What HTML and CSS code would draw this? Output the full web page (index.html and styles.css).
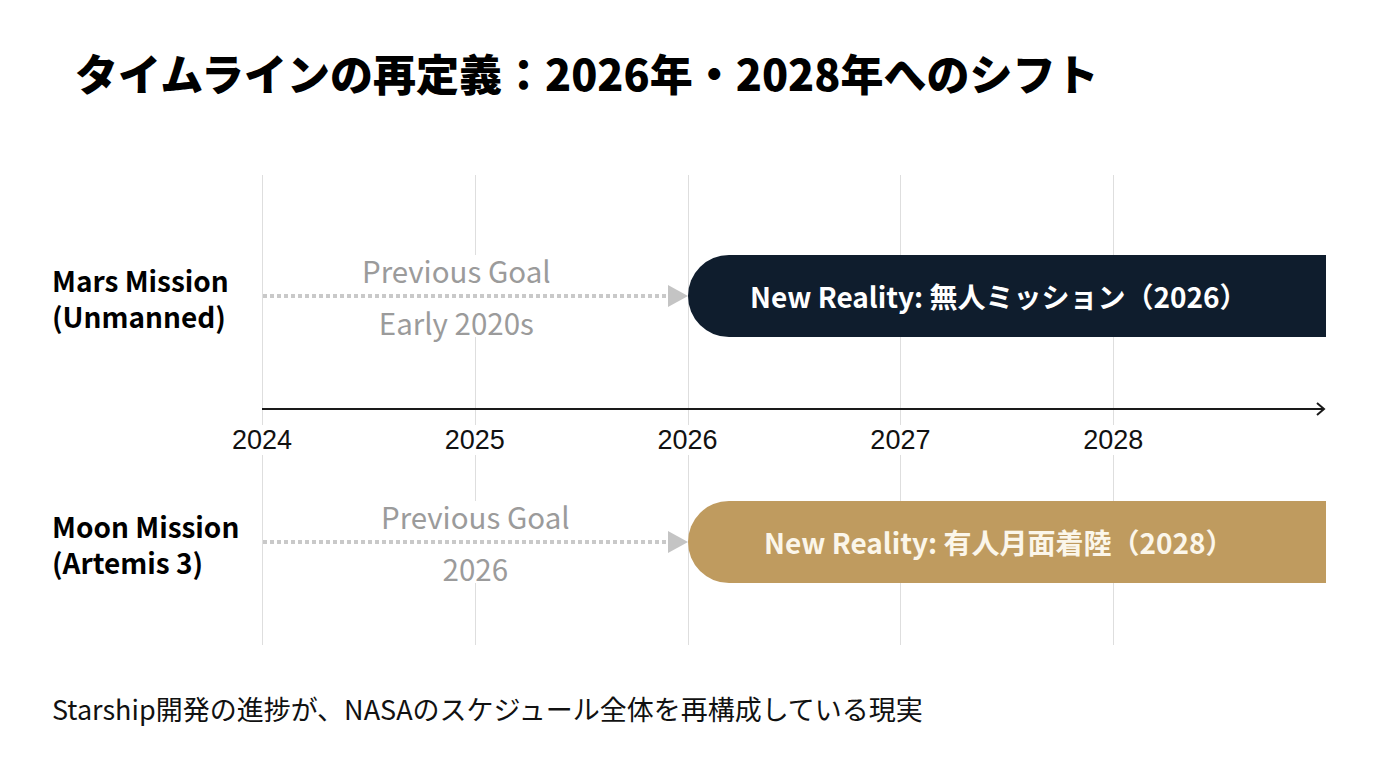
FILE: index.html
```html
<!DOCTYPE html>
<html lang="ja">
<head>
<meta charset="utf-8">
<title>タイムラインの再定義</title>
<link rel="stylesheet" href="styles.css">
</head>
<body>
<div class="slide">
  <h1 class="title">タイムラインの再定義：2026年・2028年へのシフト</h1>
  <div class="chart">
    <div class="grid-bg"></div>

    <div class="row-label mars-label"><div class="line">Mars Mission</div><div class="line">(Unmanned)</div></div>
    <div class="track mars-track">
      <div class="prev prev-mars">
        <div class="prev-text">Previous Goal</div>
        <div class="arrow"><div class="dots"></div><div class="head"></div></div>
        <div class="prev-text">Early 2020s</div>
      </div>
      <div class="bar bar-navy">New Reality: 無人ミッション（2026）</div>
    </div>

    <div class="axis">
      <svg class="axis-line" width="1064" height="18" viewBox="0 0 1064 18">
        <line x1="0" y1="9" x2="1062" y2="9" stroke="#1a1a1a" stroke-width="2"/>
        <polyline points="1055,3 1062,9 1055,15" fill="none" stroke="#1a1a1a" stroke-width="2"/>
      </svg>
      <div class="ticks">
        <div class="tick"><span>2024</span></div>
        <div class="tick"><span>2025</span></div>
        <div class="tick"><span>2026</span></div>
        <div class="tick"><span>2027</span></div>
        <div class="tick"><span>2028</span></div>
      </div>
    </div>

    <div class="row-label moon-label"><div class="line">Moon Mission</div><div class="line">(Artemis 3)</div></div>
    <div class="track moon-track">
      <div class="prev">
        <div class="prev-text">Previous Goal</div>
        <div class="arrow"><div class="dots"></div><div class="head"></div></div>
        <div class="prev-text">2026</div>
      </div>
      <div class="bar bar-gold">New Reality: 有人月面着陸（2028）</div>
    </div>
  </div>
  <p class="footer">Starship開発の進捗が、NASAのスケジュール全体を再構成している現実</p>
</div>
</body>
</html>
```

FILE: styles.css
```css
html, body {
  margin: 0;
  padding: 0;
  background: #ffffff;
}

body {
  font-family: "Noto Sans CJK JP", "Noto Sans", sans-serif;
  color: #111111;
  width: 1376px;
  height: 768px;
  overflow: hidden;
}

.slide {
  width: 1376px;
  height: 768px;
}

.title {
  margin: 0;
  padding: 44px 0 0 75px;
  font-size: 43px;
  line-height: 56px;
  font-weight: 900;
  color: #000000;
  white-space: nowrap;
}

.chart {
  margin: 75px 0 0 52px;
  display: grid;
  grid-template-columns: 210px 1064px;
  grid-template-rows: 80px 82px 63px 60px 41px 82px 62px;
}

.grid-bg {
  grid-column: 2;
  grid-row: 1 / -1;
  background-image: repeating-linear-gradient(to right, #dedede 0, #dedede 1px, transparent 1px, transparent 212.8px);
}

.row-label {
  grid-column: 1;
  align-self: center;
  font-size: 28px;
  font-weight: 700;
  color: #000000;
  padding-top: 3px;
  white-space: nowrap;
}

.row-label .line {
  height: 36px;
  line-height: 36px;
}

.mars-label { grid-row: 2; }
.moon-label { grid-row: 6; }

.track {
  grid-column: 2;
  display: grid;
  grid-template-columns: 425.6px 1fr;
}

.mars-track { grid-row: 2; }
.moon-track { grid-row: 6; }

.prev {
  margin-left: 1px;
  background: #ffffff;
  display: grid;
  grid-template-rows: 30px 22px 30px;
}

.prev-text {
  text-align: center;
  font-size: 29.5px;
  line-height: 30px;
  color: #9b9b9b;
  white-space: nowrap;
}

.prev-mars .prev-text {
  padding-right: 38px;
}

.arrow {
  display: flex;
  align-items: center;
}

.dots {
  flex: 1;
  height: 4px;
  background-image: repeating-linear-gradient(to right, #c9c9c9 0, #c9c9c9 4px, transparent 4px, transparent 7px);
}

.head {
  width: 0;
  height: 0;
  border-top: 11px solid transparent;
  border-bottom: 11px solid transparent;
  border-left: 20px solid #c4c4c4;
  margin-left: 1px;
}

.bar {
  border-radius: 41px 0 0 41px;
  display: flex;
  align-items: center;
  justify-content: center;
  padding-right: 16px;
  font-size: 28px;
  font-weight: 700;
  color: #ffffff;
  white-space: nowrap;
}

.bar-navy { background: #0f1d2d; }
.bar-gold { background: #bf9b5f; color: #fbf6ea; }

.axis {
  grid-column: 2;
  grid-row: 4;
  display: flex;
  flex-direction: column;
}

.axis-line {
  display: block;
}

.ticks {
  margin-top: 7px;
  display: grid;
  grid-template-columns: repeat(5, 212.8px);
}

.tick {
  width: 0;
  display: flex;
  justify-content: center;
}

.tick span {
  white-space: nowrap;
  background: #ffffff;
  padding: 0 4px;
  font-family: "Liberation Sans", Arial, sans-serif;
  font-size: 27px;
  line-height: 30px;
  color: #111111;
}

.footer {
  margin: 46px 0 0 52px;
  font-size: 27px;
  line-height: 36px;
  font-weight: 400;
  color: #111111;
  white-space: nowrap;
}
```
